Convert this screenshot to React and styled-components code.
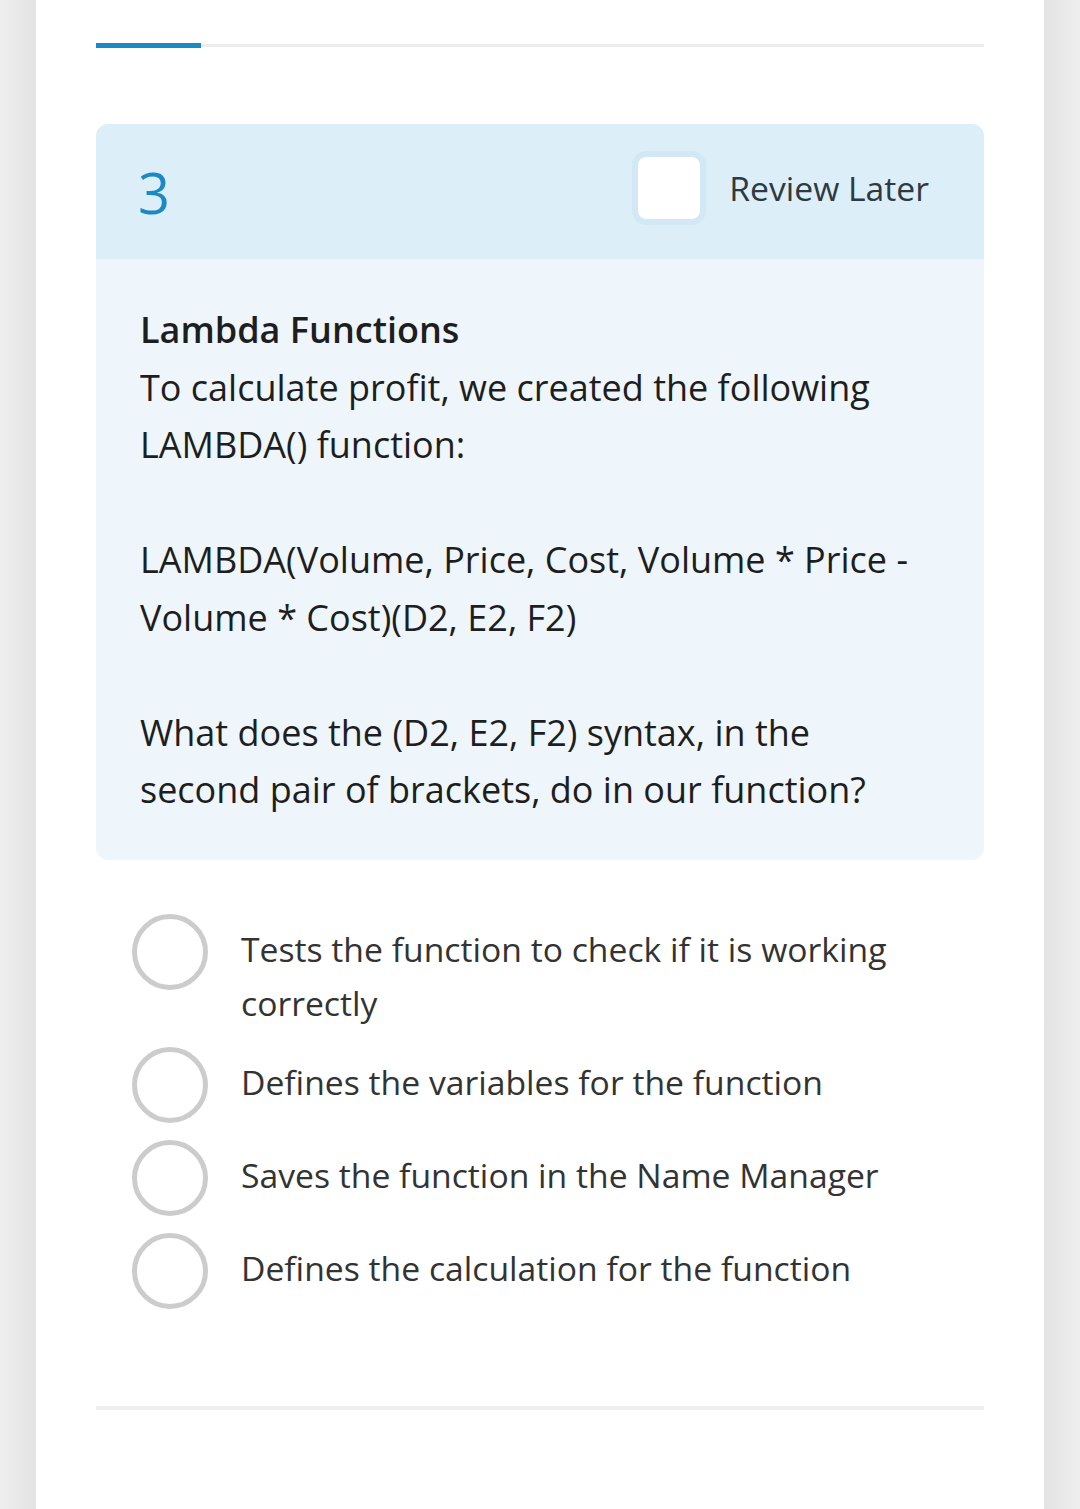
import React from 'react';
import styled, { createGlobalStyle } from 'styled-components';

const GlobalStyle = createGlobalStyle`
  html, body {
    margin: 0;
    padding: 0;
    background: #ebebeb;
  }
  body {
    font-family: "Open Sans", "Noto Sans", sans-serif;
  }
`;

const Page = styled.div`
  display: flex;
  justify-content: center;
  min-height: 1509px;
  background: linear-gradient(
    to right,
    #eeeeee 0,
    #e3e3e3 36px,
    #e3e3e3 1044px,
    #eeeeee 1080px
  );
`;

const Sheet = styled.div`
  width: 1008px;
  background: #ffffff;
  padding: 0 60px;
  box-sizing: border-box;
`;

const Progress = styled.div`
  position: relative;
  margin-top: 43px;
  height: 5px;
  display: flex;
  align-items: center;
`;

const Track = styled.div`
  flex: 1;
  height: 3px;
  background: #ededed;
`;

const Fill = styled.div`
  position: absolute;
  left: 0;
  top: 0;
  height: 5px;
  background: #1b8ac4;
`;

const QuestionCard = styled.section`
  margin-top: 76px;
  border-radius: 12px;
  overflow: hidden;
`;

const CardHeader = styled.div`
  height: 135px;
  background: #dceef8;
  display: flex;
  align-items: center;
  justify-content: space-between;
  padding: 0 55px 0 42px;
  box-sizing: border-box;
`;

const Number = styled.span`
  font-size: 56px;
  font-weight: 500;
  color: #1b8ac4;
  line-height: 1;
`;

const Review = styled.label`
  display: flex;
  align-items: center;
  gap: 23px;
  font-size: 33.7px;
  color: #2d3a43;
  cursor: pointer;
  margin-top: -8px;
`;

const Box = styled.span`
  width: 62px;
  height: 62px;
  border: 6px solid #d2e8f4;
  border-radius: 14px;
  background: #ffffff;
  background-clip: padding-box;
`;

const CardBody = styled.div`
  background: #eef6fc;
  padding: 42px 54px 41px 44px;
  font-size: 36px;
  line-height: 57.5px;
  color: #1e1e1e;
`;

const Title = styled.div`
  font-weight: 600;
`;

const Line = styled.div`
  min-height: 57.5px;
`;

const Options = styled.ul`
  list-style: none;
  margin: 54px 0 0;
  padding: 0 0 0 36px;
  display: flex;
  flex-direction: column;
  gap: 17px;
`;

const Option = styled.li`
  display: flex;
  align-items: flex-start;
  gap: 33px;
  cursor: pointer;
`;

const Radio = styled.span`
  flex: none;
  width: 66px;
  height: 66px;
  border: 5px solid #cccccc;
  border-radius: 50%;
  background: #ffffff;
`;

const OptionText = styled.span`
  padding-top: 8px;
  font-size: 33.7px;
  line-height: 54px;
  color: #333333;
`;

const Divider = styled.div`
  margin-top: 97px;
  height: 4px;
  background: #efefef;
`;

const options = [
  'Tests the function to check if it is working correctly',
  'Defines the variables for the function',
  'Saves the function in the Name Manager',
  'Defines the calculation for the function',
];

export default function App() {
  return (
    <>
      <GlobalStyle />
      <Page>
        <Sheet>
          <Progress>
            <Track />
            <Fill style={{ width: `${(105 / 888) * 100}%` }} />
          </Progress>

          <QuestionCard>
            <CardHeader>
              <Number>3</Number>
              <Review>
                <Box />
                Review Later
              </Review>
            </CardHeader>
            <CardBody>
              <Title>Lambda Functions</Title>
              <Line>To calculate profit, we created the following LAMBDA() function:</Line>
              <Line />
              <Line>LAMBDA(Volume, Price, Cost, Volume * Price - Volume * Cost)(D2, E2, F2)</Line>
              <Line />
              <Line>What does the (D2, E2, F2) syntax, in the second pair of brackets, do in our function?</Line>
            </CardBody>
          </QuestionCard>

          <Options>
            {options.map((text) => (
              <Option key={text}>
                <Radio />
                <OptionText>{text}</OptionText>
              </Option>
            ))}
          </Options>

          <Divider />
        </Sheet>
      </Page>
    </>
  );
}
